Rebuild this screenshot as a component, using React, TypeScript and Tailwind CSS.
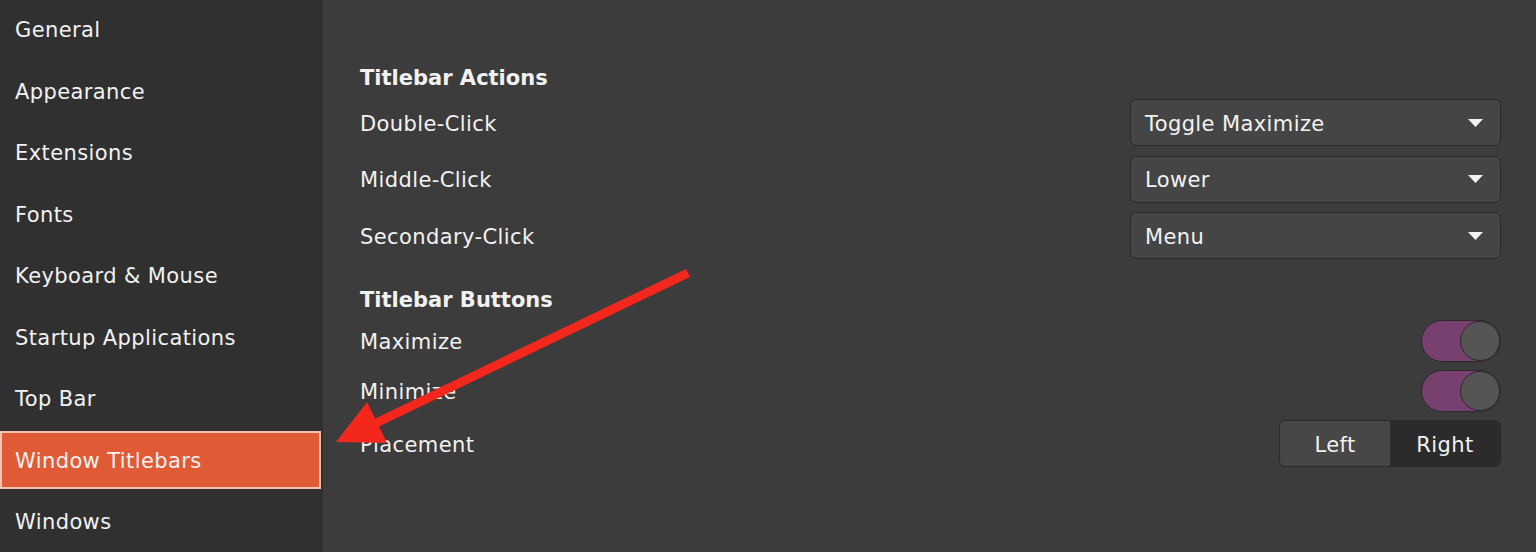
import React from 'react';

const navItems = [
  'General',
  'Appearance',
  'Extensions',
  'Fonts',
  'Keyboard & Mouse',
  'Startup Applications',
  'Top Bar',
  'Window Titlebars',
  'Windows',
];

function Dropdown({ value }: { value: string }) {
  return (
    <div className="flex h-[47px] w-[371px] items-center justify-between rounded-[6px] border border-[#2a2a2a] bg-[#454545] pl-[14px] pr-[17px]">
      <span className="pt-[4px]">{value}</span>
      <svg width="15" height="8" viewBox="0 0 15 8">
        <path d="M0 0 L15 0 L7.5 8 Z" fill="#f2f2f2" />
      </svg>
    </div>
  );
}

function Toggle() {
  return (
    <div className="flex h-[42px] w-[80px] items-center justify-end rounded-full border border-[#2a2a2a] bg-[#77406f]">
      <div className="h-[40px] w-[40px] rounded-full border border-[#2a2a2a] bg-[#555555]" />
    </div>
  );
}

function Row({ label, children, className = '' }: { label: string; children: React.ReactNode; className?: string }) {
  return (
    <div className={`flex items-center justify-between ${className}`}>
      <span className="pt-[4px]">{label}</span>
      {children}
    </div>
  );
}

export default function App() {
  return (
    <div
      className="relative flex h-[552px] w-[1536px] overflow-hidden text-[21px] tracking-[0.4px] text-[#f2f2f2]"
      style={{ fontFamily: '"DejaVu Sans", "Noto Sans", sans-serif' }}
    >
      {/* sidebar */}
      <div className="flex w-[323px] shrink-0 flex-col gap-[3.5px] bg-[#303030]">
        {navItems.map((item) => {
          const active = item === 'Window Titlebars';
          return (
            <div
              key={item}
              className={
                active
                  ? 'flex h-[58px] w-[321px] items-center border-2 border-[#f7c3ae] bg-[#e05b35] pl-[13px] pt-[4px]'
                  : 'flex h-[58px] w-[321px] items-center pl-[15px] pt-[4px]'
              }
            >
              {item}
            </div>
          );
        })}
      </div>

      {/* main */}
      <div className="flex flex-1 flex-col bg-[#3c3c3c] pl-[37px] pr-[35px] pt-[63px]">
        <div className="flex h-[28px] items-center pt-[4px] font-bold tracking-normal">Titlebar Actions</div>
        <Row label="Double-Click" className="mt-[8px] h-[47px]">
          <Dropdown value="Toggle Maximize" />
        </Row>
        <Row label="Middle-Click" className="mt-[9.5px] h-[47px]">
          <Dropdown value="Lower" />
        </Row>
        <Row label="Secondary-Click" className="mt-[9.5px] h-[47px]">
          <Dropdown value="Menu" />
        </Row>

        <div className="mt-[26px] flex h-[28px] items-center pt-[4px] font-bold tracking-normal">Titlebar Buttons</div>
        <Row label="Maximize" className="mt-[7px] h-[42px]">
          <Toggle />
        </Row>
        <Row label="Minimize" className="mt-[8px] h-[42px]">
          <Toggle />
        </Row>
        <Row label="Placement" className="mt-[8px] h-[47px]">
          <div className="flex h-[47px] w-[222px] overflow-hidden rounded-[6px] border border-[#2a2a2a]">
            <div className="flex flex-1 items-center justify-center bg-[#474747] pt-[4px]">Left</div>
            <div className="flex flex-1 items-center justify-center bg-[#2b2b2b] pt-[4px]">Right</div>
          </div>
        </Row>
      </div>

      {/* annotation arrow */}
      <svg className="pointer-events-none absolute left-0 top-0" width="1536" height="552" viewBox="0 0 1536 552">
        <line x1="688" y1="273" x2="372" y2="425" stroke="#f3271c" strokeWidth="9" />
        <polygon points="336,442 367,402 387,443" fill="#f3271c" />
      </svg>
    </div>
  );
}
